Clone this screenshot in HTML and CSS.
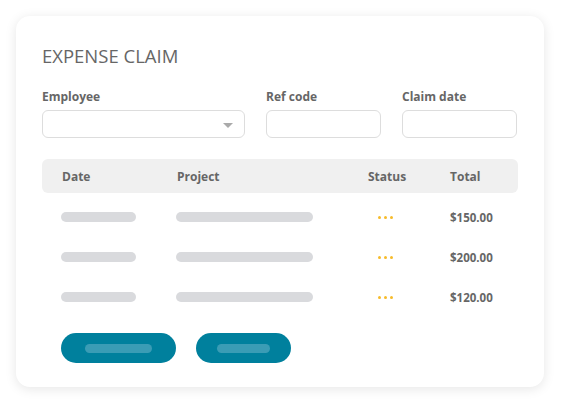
FILE: index.html
```html
<!DOCTYPE html>
<html lang="en">

<head>
    <meta charset="UTF-8">
    <meta name="viewport" content="width=device-width, initial-scale=1.0">
    <title>Expense claim</title>
    <link rel="stylesheet" href="styles.css">
</head>

<body>
    <div class="card">
        <h1 class="title">EXPENSE CLAIM</h1>

        <div class="fields">
            <div class="field field-wide">
                <label>Employee</label>
                <div class="input select">
                    <span class="caret"></span>
                </div>
            </div>
            <div class="field">
                <label>Ref code</label>
                <div class="input"></div>
            </div>
            <div class="field">
                <label>Claim date</label>
                <div class="input"></div>
            </div>
        </div>

        <div class="table">
            <div class="row table-head">
                <span>Date</span>
                <span>Project</span>
                <span>Status</span>
                <span>Total</span>
            </div>
            <div class="row">
                <span class="bar bar-date"></span>
                <span class="bar bar-project"></span>
                <span class="dots"><i></i><i></i><i></i></span>
                <span class="total">$150.00</span>
            </div>
            <div class="row">
                <span class="bar bar-date"></span>
                <span class="bar bar-project"></span>
                <span class="dots"><i></i><i></i><i></i></span>
                <span class="total">$200.00</span>
            </div>
            <div class="row">
                <span class="bar bar-date"></span>
                <span class="bar bar-project"></span>
                <span class="dots"><i></i><i></i><i></i></span>
                <span class="total">$120.00</span>
            </div>
        </div>

        <div class="actions">
            <button class="btn btn-main"><span></span></button>
            <button class="btn btn-second"><span></span></button>
        </div>
    </div>
</body>

</html>
```

FILE: styles.css
```css
html, body {
    margin: 0;
    background: #ffffff;
}

body {
    font-family: "Open Sans", Arial, sans-serif;
    padding: 16px 24px 26px 16px;
    color: #666666;
}

.card {
    background: #ffffff;
    border-radius: 14px;
    box-shadow: 0 2px 12px rgba(0, 0, 0, 0.10);
    padding: 27px 26px 24px 26px;
    width: 476px;
}

.title {
    margin: 0;
    font-size: 18.5px;
    font-weight: 400;
    line-height: 26px;
    color: #666666;
}

.fields {
    display: flex;
    gap: 21px;
    margin-top: 20px;
}

.field {
    display: flex;
    flex-direction: column;
    width: 115px;
}

.field-wide {
    width: 203px;
}

.field label {
    font-size: 12px;
    font-weight: 700;
    line-height: 16px;
    margin-bottom: 5px;
}

.input {
    height: 26px;
    border: 1.5px solid #dddddd;
    border-radius: 6px;
    position: relative;
}

.caret {
    position: absolute;
    right: 11px;
    top: 12px;
    width: 0;
    height: 0;
    border-left: 5px solid transparent;
    border-right: 5px solid transparent;
    border-top: 5px solid #aaaaaa;
}

.table {
    margin-top: 21px;
}

.row {
    display: grid;
    grid-template-columns: 115px 191px 82px 1fr;
    align-items: center;
    padding-left: 20px;
    height: 40px;
}

.table-head {
    height: 34px;
    background: #f0f0f0;
    border-radius: 6px;
    font-size: 12px;
    font-weight: 700;
    margin-bottom: 4px;
}

.bar {
    display: block;
    height: 10px;
    border-radius: 5px;
    background: #d9dadd;
}

.bar-date {
    width: 75px;
    margin-left: -1px;
}

.bar-project {
    width: 137px;
    margin-left: -1px;
}

.dots {
    display: flex;
    gap: 3px;
    padding-left: 10px;
}

.dots i {
    width: 3px;
    height: 3px;
    border-radius: 50%;
    background: #f7bb2a;
}

.total {
    font-size: 11.5px;
    font-weight: 700;
}

.actions {
    display: flex;
    gap: 20px;
    margin-top: 16px;
    padding-left: 19px;
}

.btn {
    height: 30px;
    border: none;
    border-radius: 15px;
    background: #00809d;
    display: flex;
    align-items: center;
    justify-content: center;
    padding: 0;
}

.btn span {
    display: block;
    height: 9px;
    border-radius: 5px;
    background: #3a9cb5;
}

.btn-main {
    width: 115px;
}

.btn-main span {
    width: 67px;
}

.btn-second {
    width: 95px;
}

.btn-second span {
    width: 53px;
}
```
